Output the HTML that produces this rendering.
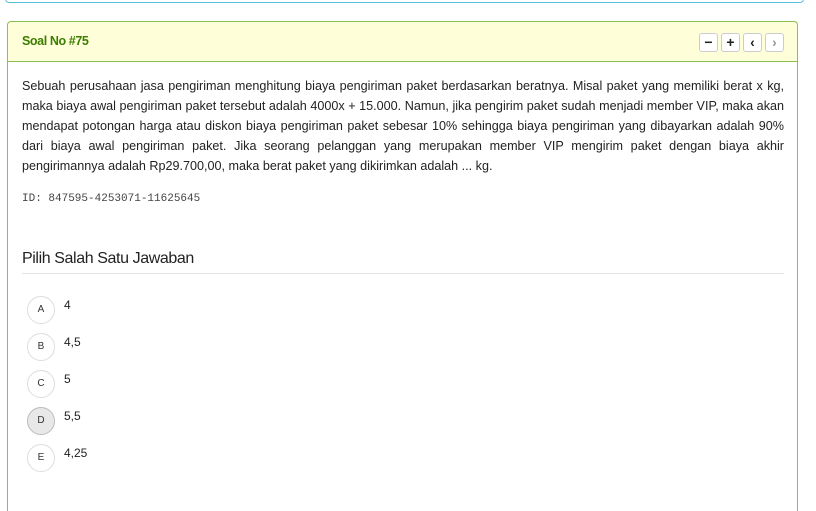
<html><head><style>
html,body{margin:0;background:#fff;font-family:"Liberation Sans",sans-serif;width:816px;height:511px;overflow:hidden;position:relative}
.top{position:absolute;left:5px;top:-10px;width:797px;height:11px;border:1px solid #5bc0de;border-radius:4px}
.panel{position:absolute;left:7px;top:21px;width:789px;height:490px;border:1px solid #8cc152;border-bottom:none;border-radius:4px 4px 0 0}
.hd{height:39px;background:#fefed8;border-bottom:1px solid #8cc152;border-radius:4px 4px 0 0;position:relative}
.hd b{position:absolute;left:14px;top:12px;font-size:12.5px;color:#3b7d00;letter-spacing:-0.4px}
.btns{position:absolute;right:13px;top:11px;display:flex;gap:3px}
.btns span{width:17px;height:17px;border:1px solid #ccc;border-radius:3px;background:#fff;font-size:14px;font-weight:bold;text-align:center;line-height:16px;color:#222}
.txt{position:absolute;left:14px;top:54px;width:762px;font-size:12.6px;line-height:20px;text-align:justify;color:#222}
.id{position:absolute;left:14px;top:171px;font-family:"Liberation Mono",monospace;font-size:11px;color:#444}
.h{position:absolute;left:14px;top:228px;width:762px;font-size:16px;color:#222;padding-bottom:5px;border-bottom:1px solid #e5e5e5;letter-spacing:-0.4px}
.opt{position:absolute;left:19px;width:26px;height:26px;border:1px solid #ddd;border-radius:50%;font-size:10px;text-align:center;line-height:26px;color:#333;background:#fff}
.ot{position:absolute;left:56px;font-size:12px;color:#222}
</style></head><body>
<div class="top"></div>
<div class="panel">
<div class="hd"><b>Soal No #75</b><div class="btns"><span>−</span><span>+</span><span>‹</span><span style="color:#999">›</span></div></div>
<div class="txt">Sebuah perusahaan jasa pengiriman menghitung biaya pengiriman paket berdasarkan beratnya. Misal paket yang memiliki berat x kg, maka biaya awal pengiriman paket tersebut adalah 4000x + 15.000. Namun, jika pengirim paket sudah menjadi member VIP, maka akan mendapat potongan harga atau diskon biaya pengiriman paket sebesar 10% sehingga biaya pengiriman yang dibayarkan adalah 90% dari biaya awal pengiriman paket. Jika seorang pelanggan yang merupakan member VIP mengirim paket dengan biaya akhir pengirimannya adalah Rp29.700,00, maka berat paket yang dikirimkan adalah ... kg.</div>
<div class="id">ID: 847595-4253071-11625645</div>
<div class="h">Pilih Salah Satu Jawaban</div>
<div class="opt" style="top:274px">A</div><div class="ot" style="top:276px">4</div>
<div class="opt" style="top:311px">B</div><div class="ot" style="top:313px">4,5</div>
<div class="opt" style="top:348px">C</div><div class="ot" style="top:350px">5</div>
<div class="opt" style="top:385px;background:#e8e8e8;border-color:#bbb">D</div><div class="ot" style="top:387px">5,5</div>
<div class="opt" style="top:422px">E</div><div class="ot" style="top:424px">4,25</div>
</div>
</body></html>
